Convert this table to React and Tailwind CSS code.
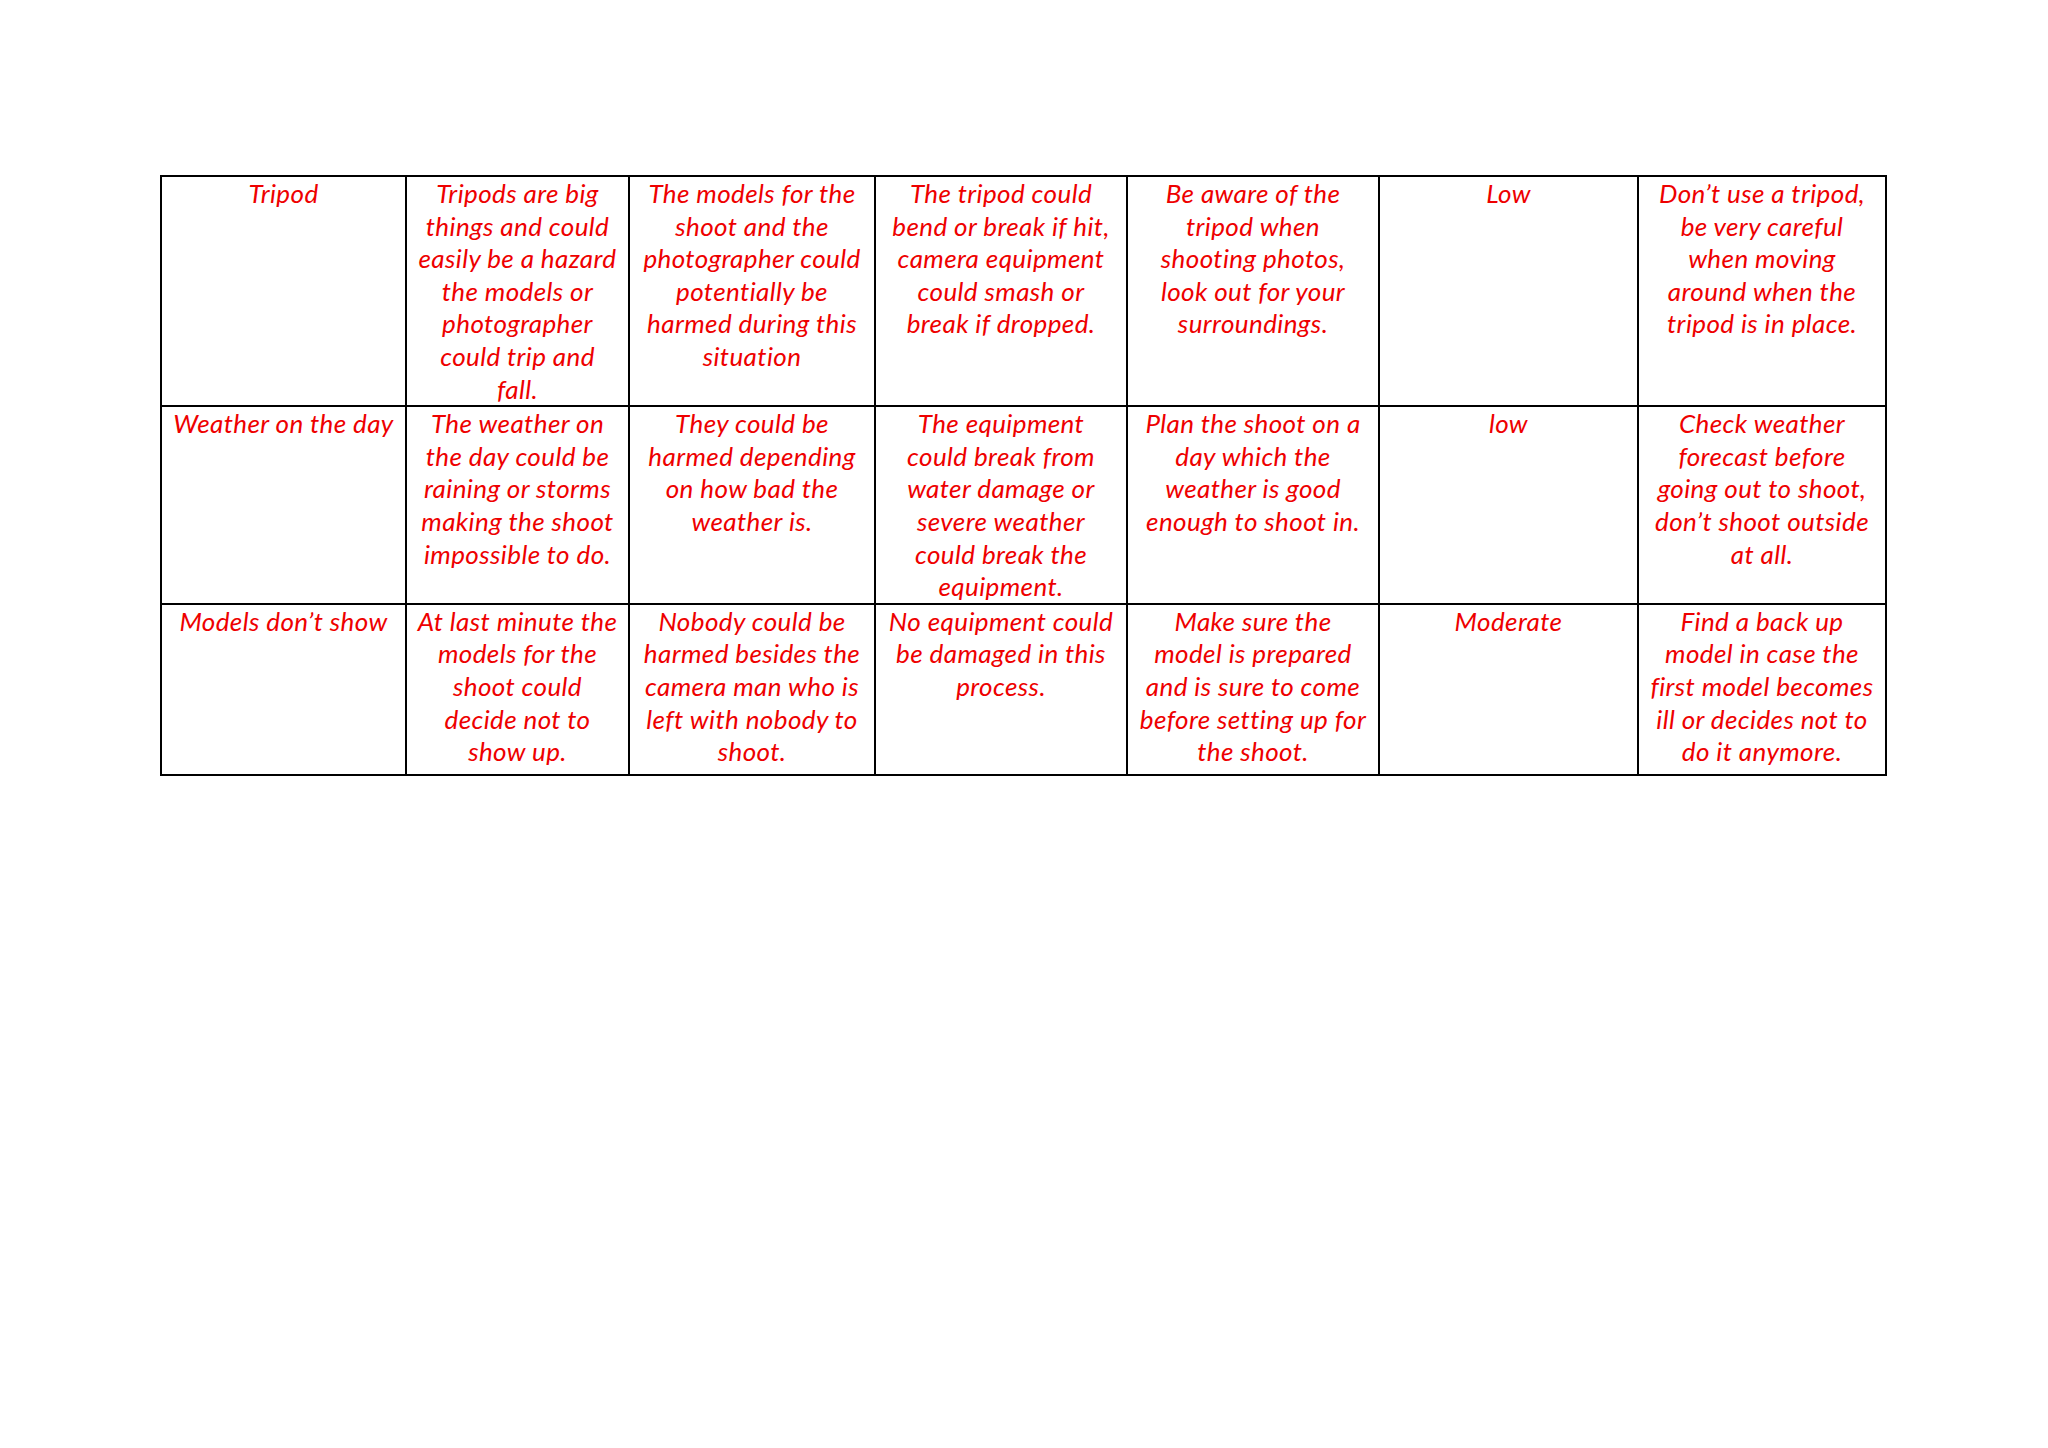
const rows = [
  {
    h: "h-[230px]",
    cells: [
      ["Tripod"],
      ["Tripods are big", "things and could", "easily be a hazard", "the models or", "photographer", "could trip and", "fall."],
      ["The models for the", "shoot and the", "photographer could", "potentially be", "harmed during this", "situation"],
      ["The tripod could", "bend or break if hit,", "camera equipment", "could smash or", "break if dropped."],
      ["Be aware of the", "tripod when", "shooting photos,", "look out for your", "surroundings."],
      ["Low"],
      ["Don\u2019t use a tripod,", "be very careful", "when moving", "around when the", "tripod is in place."],
    ],
  },
  {
    h: "h-[197px]",
    cells: [
      ["Weather on the day"],
      ["The weather on", "the day could be", "raining or storms", "making the shoot", "impossible to do."],
      ["They could be", "harmed depending", "on how bad the", "weather is."],
      ["The equipment", "could break from", "water damage or", "severe weather", "could break the", "equipment."],
      ["Plan the shoot on a", "day which the", "weather is good", "enough to shoot in."],
      ["low"],
      ["Check weather", "forecast before", "going out to shoot,", "don\u2019t shoot outside", "at all."],
    ],
  },
  {
    h: "h-[171px]",
    cells: [
      ["Models don\u2019t show"],
      ["At last minute the", "models for the", "shoot could", "decide not to", "show up."],
      ["Nobody could be", "harmed besides the", "camera man who is", "left with nobody to", "shoot."],
      ["No equipment could", "be damaged in this", "process."],
      ["Make sure the", "model is prepared", "and is sure to come", "before setting up for", "the shoot."],
      ["Moderate"],
      ["Find a back up", "model in case the", "first model becomes", "ill or decides not to", "do it anymore."],
    ],
  },
];

const widths = ["w-[245px]", "w-[223px]", "w-[246px]", "w-[252px]", "w-[252px]", "w-[259px]", "w-[248px]"];

export default function App() {
  return (
    <div className="min-h-[1448px] w-[2048px] bg-white pl-[160px] pt-[175px] font-['Lato','Liberation_Sans',sans-serif]">
      <table className="table-fixed border-collapse border-[2px] border-black">
        <colgroup>
          {widths.map((w, i) => (
            <col key={i} className={w} />
          ))}
        </colgroup>
        <tbody>
          {rows.map((row, r) => (
            <tr key={r} className={row.h}>
              {row.cells.map((lines, c) => (
                <td
                  key={c}
                  className="border-[2px] border-black p-0 align-top text-center text-[26px] italic leading-[32.6px] tracking-[0.4px] text-[#ee0000]"
                >
                  {lines.map((l, k) => (
                    <div key={k} className="whitespace-nowrap">
                      {l}
                    </div>
                  ))}
                </td>
              ))}
            </tr>
          ))}
        </tbody>
      </table>
    </div>
  );
}
